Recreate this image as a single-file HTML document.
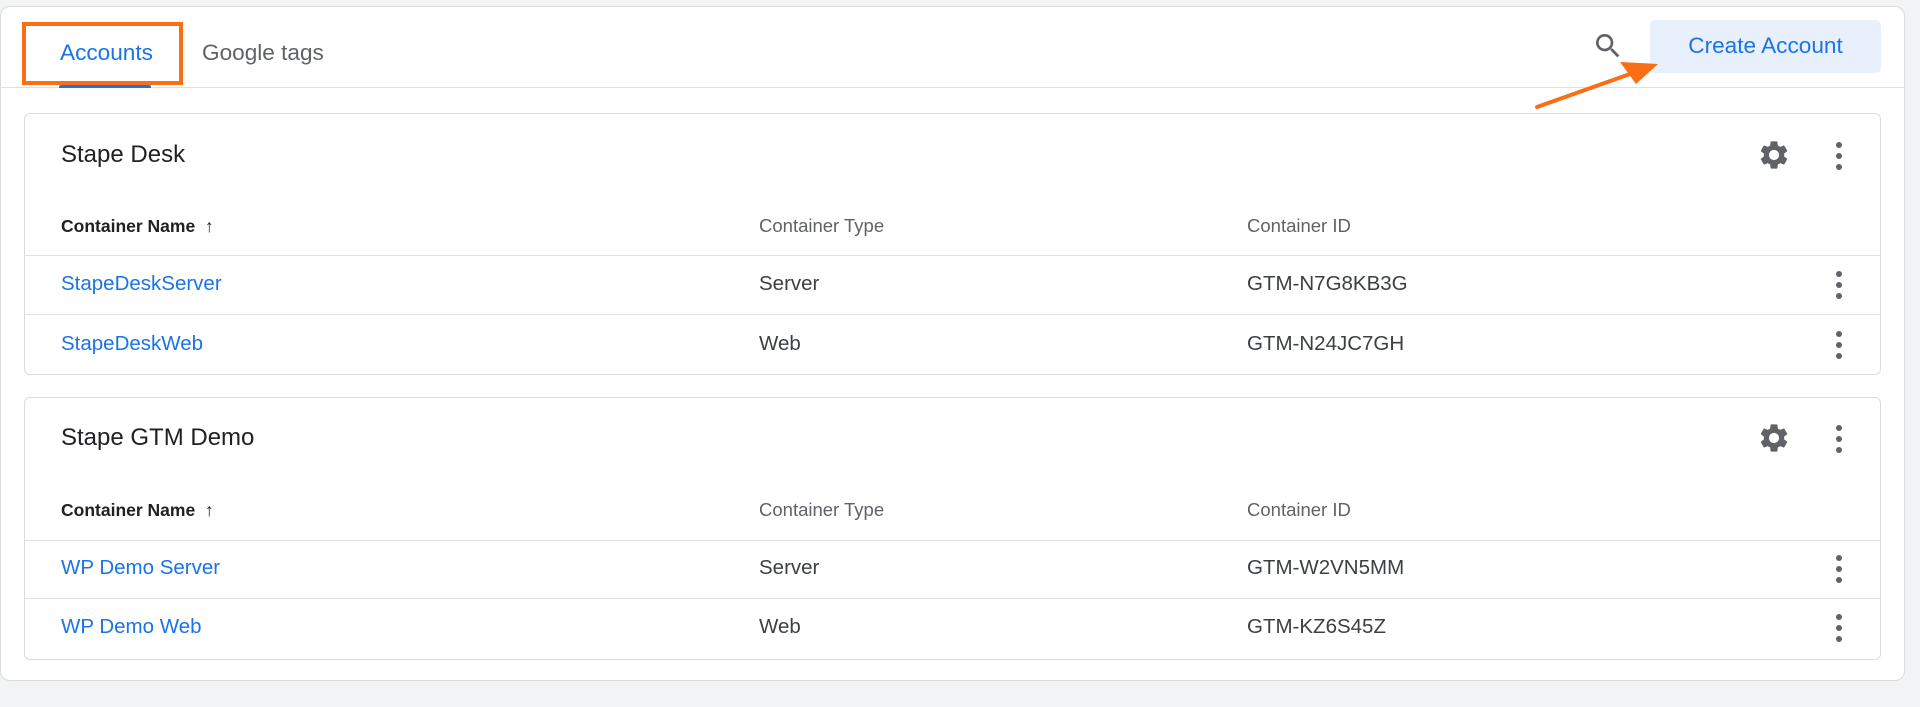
<!DOCTYPE html>
<html><head><meta charset="utf-8"><style>
*{margin:0;padding:0;box-sizing:border-box}
body{width:1920px;height:707px;background:#f1f3f4;font-family:"Liberation Sans",Arial,sans-serif;position:relative;overflow:hidden}
.a{position:absolute}
.outer{left:0;top:6px;width:1905px;height:675px;background:#fff;border:1px solid #dadce0;border-radius:10px}
.card{left:24px;width:1857px;background:#fff;border:1px solid #dadce0;border-radius:6px}
.t{position:absolute;white-space:nowrap;line-height:1}
.title{font-size:24px;color:#202124}
.hd{font-size:17.5px;font-weight:bold;color:#202124}
.hd2{font-size:18.5px;color:#5f6368}
.lk{font-size:20.5px;color:#1a73e8}
.tx{font-size:20.5px;color:#3c4043}
.ln{position:absolute;left:0;right:0;height:1px;background:#e0e0e0}
</style></head><body>
<div class="a outer"></div>
<div class="a" style="left:1px;top:87px;width:1903px;height:1px;background:#e0e0e0"></div>
<div class="a" style="left:59px;top:85px;width:92px;height:3px;background:#1a73e8;border-radius:2px 2px 0 0"></div>
<div class="a" style="left:22px;top:22px;width:161px;height:63px;border:4px solid #fa6e14"></div>
<div class="t" style="left:60px;top:42px;font-size:22.6px;color:#1a73e8">Accounts</div>
<div class="t" style="left:202px;top:42px;font-size:22.6px;color:#5f6368">Google tags</div>
<svg class="a" style="left:1592px;top:30px" width="32" height="32" viewBox="0 0 24 24"><path fill="#5f6368" d="M15.5 14h-.79l-.28-.27A6.470 6.470 0 0 0 16 9.5 6.5 6.5 0 1 0 9.5 16c1.61 0 3.09-.59 4.23-1.570l.27.28v.79l5 4.99L20.490 19l-4.99-5zm-6 0C7.010 14 5 11.990 5 9.5S7.010 5 9.5 5 14 7.010 14 9.5 11.990 14 9.5 14z"/></svg>
<div class="a" style="left:1650px;top:20px;width:231px;height:53px;background:#e8f0fe;border-radius:5px"></div>
<div class="t" style="left:1650px;width:231px;text-align:center;top:35px;font-size:22.6px;color:#1a73e8">Create Account</div>
<svg class="a" style="left:0;top:0" width="1920" height="707"><line x1="1537" y1="107" x2="1630" y2="74" stroke="#fa6e14" stroke-width="4" stroke-linecap="round"/><polygon points="1658,64 1620,62 1636,84" fill="#fa6e14"/></svg>

<!-- card 1 -->
<div class="a card" style="top:113px;height:262px">
 <div class="t title" style="left:36px;top:29px">Stape Desk</div>
 <svg class="a" style="left:1732px;top:24px" width="34" height="34" viewBox="0 0 24 24"><path fill="#5f6368" d="M19.140 12.940c.04-.3.06-.61.06-.94 0-.32-.02-.64-.07-.94l2.030-1.580a.49.49 0 0 0 .12-.61l-1.920-3.320a.49.49 0 0 0-.59-.22l-2.390.96c-.5-.38-1.030-.7-1.620-.94l-.36-2.540a.48.48 0 0 0-.48-.41h-3.840c-.24 0-.43.17-.47.41l-.36 2.540c-.59.24-1.130.57-1.620.94l-2.390-.96a.48.48 0 0 0-.59.22L2.740 8.870c-.12.21-.08.47.12.61l2.030 1.580c-.05.3-.09.63-.09.94s.02.64.07.94l-2.030 1.580a.49.49 0 0 0-.12.61l1.920 3.320c.12.22.37.29.59.22l2.390-.96c.5.38 1.030.7 1.620.94l.36 2.540c.05.24.24.41.48.41h3.840c.24 0 .44-.17.47-.41l.36-2.540c.59-.24 1.130-.56 1.620-.94l2.390.96c.22.08.47 0 .59-.22l1.920-3.320c.12-.22.07-.47-.12-.61l-2.010-1.580zM12 15.600A3.600 3.600 0 1 1 12 8.400a3.600 3.600 0 0 1 0 7.200z"/></svg>
 <svg class="a" style="left:1808px;top:27px" width="12" height="30"><circle cx="6" cy="4" r="3" fill="#5f6368"/><circle cx="6" cy="15" r="3" fill="#5f6368"/><circle cx="6" cy="26" r="3" fill="#5f6368"/></svg>
 <div class="t hd" style="left:36px;top:104px">Container Name &nbsp;↑</div>
 <div class="t hd2" style="left:734px;top:103px">Container Type</div>
 <div class="t hd2" style="left:1222px;top:103px">Container ID</div>
 <div class="ln" style="top:141px"></div>
 <div class="t lk" style="left:36px;top:160px">StapeDeskServer</div>
 <div class="t tx" style="left:734px;top:160px">Server</div>
 <div class="t tx" style="left:1222px;top:160px">GTM-N7G8KB3G</div>
 <svg class="a" style="left:1808px;top:156px" width="12" height="30"><circle cx="6" cy="4" r="3" fill="#5f6368"/><circle cx="6" cy="15" r="3" fill="#5f6368"/><circle cx="6" cy="26" r="3" fill="#5f6368"/></svg>
 <div class="ln" style="top:200px"></div>
 <div class="t lk" style="left:36px;top:220px">StapeDeskWeb</div>
 <div class="t tx" style="left:734px;top:220px">Web</div>
 <div class="t tx" style="left:1222px;top:220px">GTM-N24JC7GH</div>
 <svg class="a" style="left:1808px;top:216px" width="12" height="30"><circle cx="6" cy="4" r="3" fill="#5f6368"/><circle cx="6" cy="15" r="3" fill="#5f6368"/><circle cx="6" cy="26" r="3" fill="#5f6368"/></svg>
</div>

<!-- card 2 -->
<div class="a card" style="top:397px;height:263px">
 <div class="t title" style="left:36px;top:28px">Stape GTM Demo</div>
 <svg class="a" style="left:1732px;top:23px" width="34" height="34" viewBox="0 0 24 24"><path fill="#5f6368" d="M19.140 12.940c.04-.3.06-.61.06-.94 0-.32-.02-.64-.07-.94l2.030-1.580a.49.49 0 0 0 .12-.61l-1.920-3.320a.49.49 0 0 0-.59-.22l-2.390.96c-.5-.38-1.030-.7-1.620-.94l-.36-2.540a.48.48 0 0 0-.48-.41h-3.840c-.24 0-.43.17-.47.41l-.36 2.540c-.59.24-1.130.57-1.620.94l-2.390-.96a.48.48 0 0 0-.59.22L2.740 8.870c-.12.21-.08.47.12.61l2.030 1.580c-.05.3-.09.63-.09.94s.02.64.07.94l-2.030 1.580a.49.49 0 0 0-.12.61l1.920 3.320c.12.22.37.29.59.22l2.390-.96c.5.38 1.030.7 1.620.94l.36 2.540c.05.24.24.41.48.41h3.840c.24 0 .44-.17.47-.41l.36-2.540c.59-.24 1.130-.56 1.620-.94l2.390.96c.22.08.47 0 .59-.22l1.920-3.320c.12-.22.07-.47-.12-.61l-2.010-1.580zM12 15.600A3.600 3.600 0 1 1 12 8.400a3.600 3.600 0 0 1 0 7.200z"/></svg>
 <svg class="a" style="left:1808px;top:26px" width="12" height="30"><circle cx="6" cy="4" r="3" fill="#5f6368"/><circle cx="6" cy="15" r="3" fill="#5f6368"/><circle cx="6" cy="26" r="3" fill="#5f6368"/></svg>
 <div class="t hd" style="left:36px;top:104px">Container Name &nbsp;↑</div>
 <div class="t hd2" style="left:734px;top:103px">Container Type</div>
 <div class="t hd2" style="left:1222px;top:103px">Container ID</div>
 <div class="ln" style="top:142px"></div>
 <div class="t lk" style="left:36px;top:160px">WP Demo Server</div>
 <div class="t tx" style="left:734px;top:160px">Server</div>
 <div class="t tx" style="left:1222px;top:160px">GTM-W2VN5MM</div>
 <svg class="a" style="left:1808px;top:156px" width="12" height="30"><circle cx="6" cy="4" r="3" fill="#5f6368"/><circle cx="6" cy="15" r="3" fill="#5f6368"/><circle cx="6" cy="26" r="3" fill="#5f6368"/></svg>
 <div class="ln" style="top:200px"></div>
 <div class="t lk" style="left:36px;top:219px">WP Demo Web</div>
 <div class="t tx" style="left:734px;top:219px">Web</div>
 <div class="t tx" style="left:1222px;top:219px">GTM-KZ6S45Z</div>
 <svg class="a" style="left:1808px;top:215px" width="12" height="30"><circle cx="6" cy="4" r="3" fill="#5f6368"/><circle cx="6" cy="15" r="3" fill="#5f6368"/><circle cx="6" cy="26" r="3" fill="#5f6368"/></svg>
</div>
</body></html>
